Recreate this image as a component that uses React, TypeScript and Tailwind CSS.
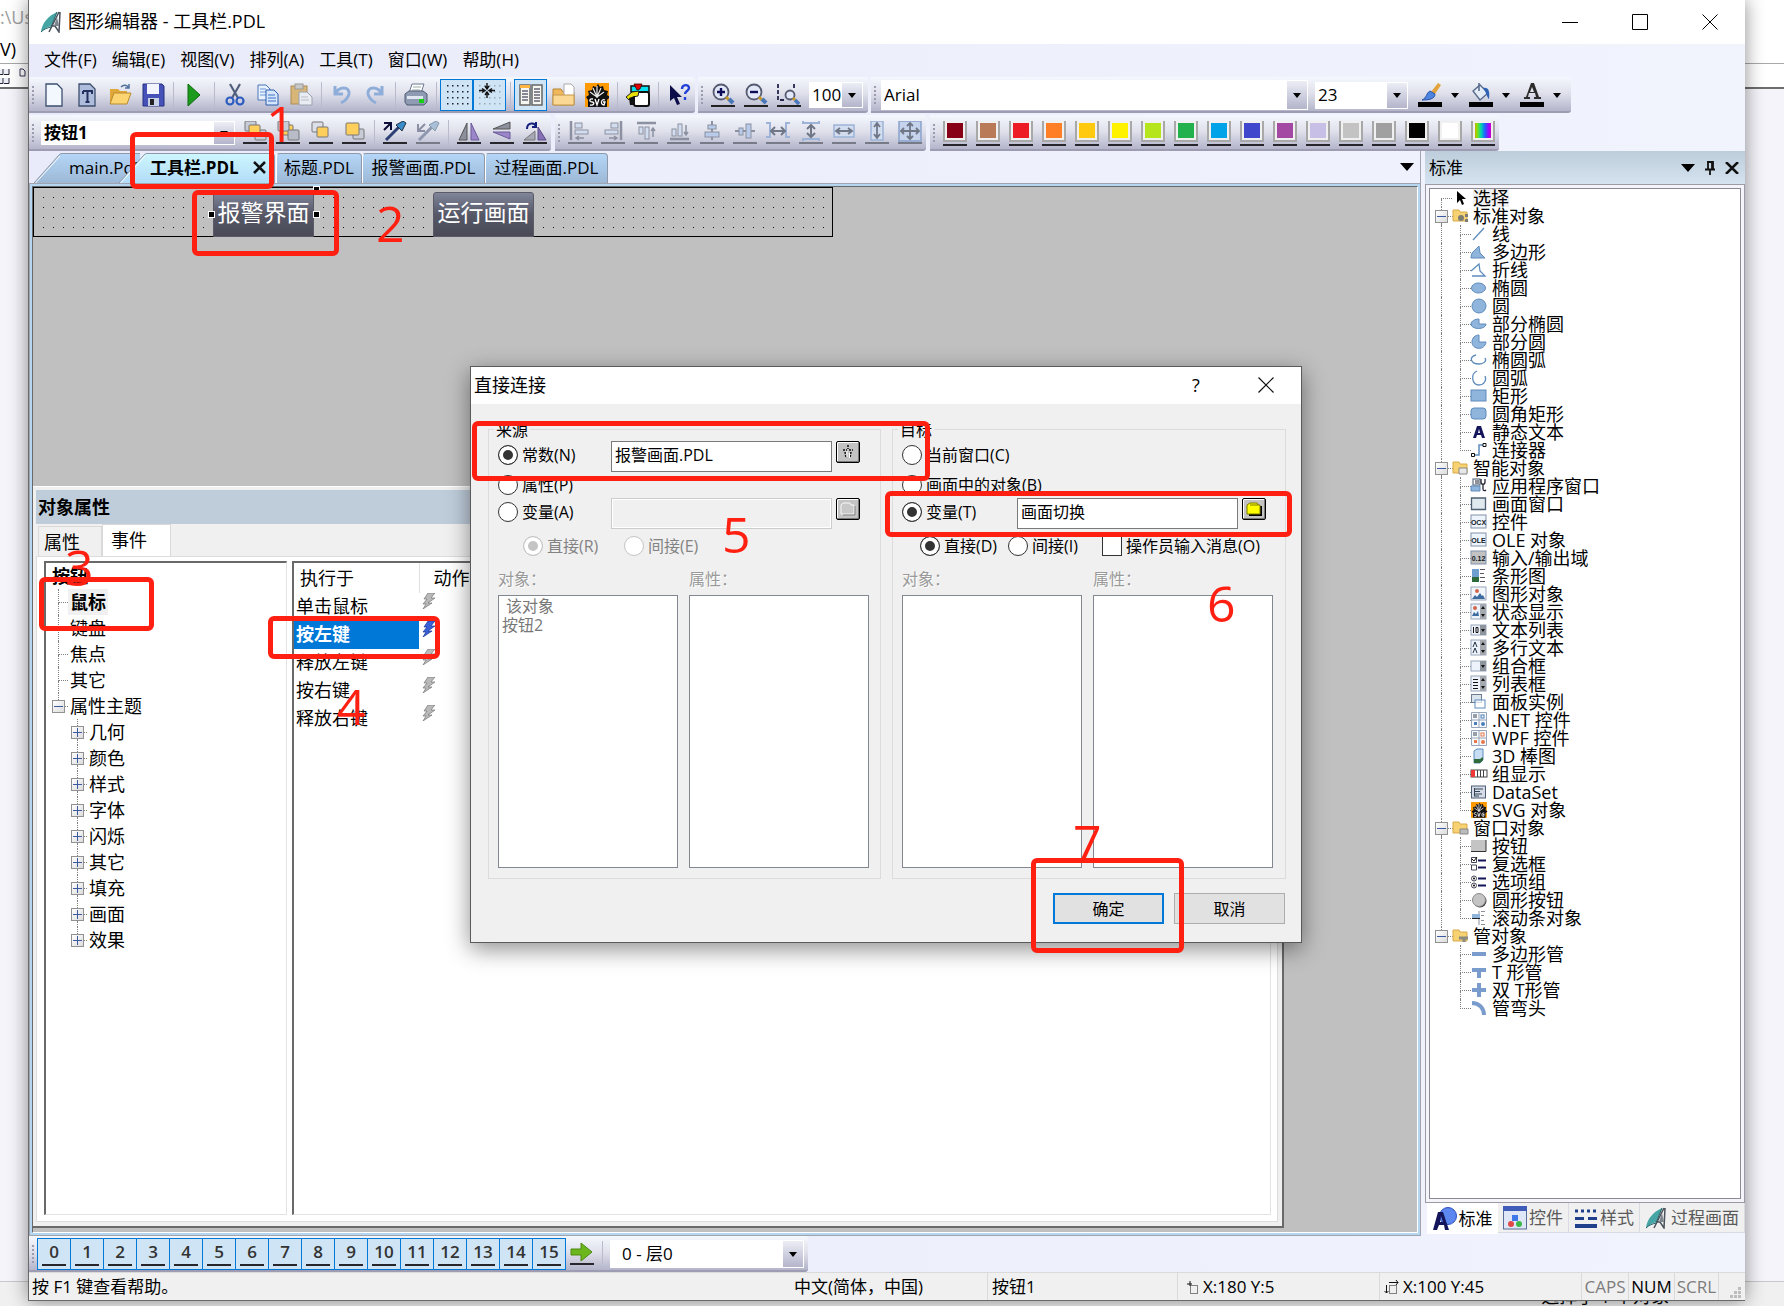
import React from 'react'

type TreeItem = {
  name: string
  icon: string
}

type TreeGroup = {
  name: string
  badge: string
  items: TreeItem[]
}

type Mark = {
  boxClass: string
  digit: string
  digitClass: string
}

const menus = ['文件(F)', '编辑(E)', '视图(V)', '排列(A)', '工具(T)', '窗口(W)', '帮助(H)']

const swatches = [
  'bg-[#880015]',
  'bg-[#b97a57]',
  'bg-[#ed1c24]',
  'bg-[#ff7f27]',
  'bg-[#ffc90e]',
  'bg-[#fff200]',
  'bg-[#b5e61d]',
  'bg-[#22b14c]',
  'bg-[#00a2e8]',
  'bg-[#3f48cc]',
  'bg-[#a349a4]',
  'bg-[#c8bfe7]',
  'bg-[#c3c3c3]',
  'bg-[#a0a0a0]',
  'bg-black',
  'bg-white',
  'bg-[linear-gradient(to_right,#ff7a00,#8be000,#00d8b0,#2060ff,#a000ff,#ff0080)]',
]

const groups: TreeGroup[] = [
  {
    name: '标准对象',
    badge: 'gear',
    items: [
      { name: '线', icon: 'line' },
      { name: '多边形', icon: 'polygon' },
      { name: '折线', icon: 'polyline' },
      { name: '椭圆', icon: 'ellipse' },
      { name: '圆', icon: 'circle' },
      { name: '部分椭圆', icon: 'pieEllipse' },
      { name: '部分圆', icon: 'pie' },
      { name: '椭圆弧', icon: 'arcEllipse' },
      { name: '圆弧', icon: 'arc' },
      { name: '矩形', icon: 'rect' },
      { name: '圆角矩形', icon: 'roundRect' },
      { name: '静态文本', icon: 'text' },
      { name: '连接器', icon: 'connector' },
    ],
  },
  {
    name: '智能对象',
    badge: 'picture',
    items: [
      { name: '应用程序窗口', icon: 'appWindow' },
      { name: '画面窗口', icon: 'pictureWindow' },
      { name: '控件', icon: 'ocx' },
      { name: 'OLE 对象', icon: 'ole' },
      { name: '输入/输出域', icon: 'io' },
      { name: '条形图', icon: 'bar' },
      { name: '图形对象', icon: 'image' },
      { name: '状态显示', icon: 'status' },
      { name: '文本列表', icon: 'textList' },
      { name: '多行文本', icon: 'multiText' },
      { name: '组合框', icon: 'combo' },
      { name: '列表框', icon: 'listBox' },
      { name: '面板实例', icon: 'faceplate' },
      { name: '.NET 控件', icon: 'net' },
      { name: 'WPF 控件', icon: 'wpf' },
      { name: '3D 棒图', icon: 'bar3d' },
      { name: '组显示', icon: 'groupDisplay' },
      { name: 'DataSet', icon: 'dataSet' },
      { name: 'SVG 对象', icon: 'svg' },
    ],
  },
  {
    name: '窗口对象',
    badge: 'button',
    items: [
      { name: '按钮', icon: 'button' },
      { name: '复选框', icon: 'check' },
      { name: '选项组', icon: 'radio' },
      { name: '圆形按钮', icon: 'roundButton' },
      { name: '滚动条对象', icon: 'slider' },
    ],
  },
  {
    name: '管对象',
    badge: 'pipe',
    items: [
      { name: '多边形管', icon: 'pipe' },
      { name: 'T 形管', icon: 'tPipe' },
      { name: '双 T形管', icon: 'crossPipe' },
      { name: '管弯头', icon: 'bend' },
    ],
  },
]

const eventNodes = ['鼠标', '键盘', '焦点', '其它']
const themeNodes = ['几何', '颜色', '样式', '字体', '闪烁', '其它', '填充', '画面', '效果']
const eventRows = ['单击鼠标', '按左键', '释放左键', '按右键', '释放右键']
const layers = Array.from({ length: 16 }, (_, i) => i)

const marks: Mark[] = [
  { boxClass: 'left-[130px] top-[132px] w-[144px] h-[57px]', digit: '1', digitClass: 'left-[266px] top-[96px]' },
  { boxClass: 'left-[192px] top-[190px] w-[147px] h-[66px]', digit: '2', digitClass: 'left-[376px] top-[196px]' },
  { boxClass: 'left-[39px] top-[577px] w-[115px] h-[54px]', digit: '3', digitClass: 'left-[65px] top-[540px]' },
  { boxClass: 'left-[268px] top-[616px] w-[172px] h-[43px]', digit: '4', digitClass: 'left-[337px] top-[679px]' },
  { boxClass: 'left-[472px] top-[421px] w-[458px] h-[60px]', digit: '5', digitClass: 'left-[722px] top-[507px]' },
  { boxClass: 'left-[885px] top-[491px] w-[407px] h-[46px]', digit: '6', digitClass: 'left-[1207px] top-[576px]' },
  { boxClass: 'left-[1031px] top-[858px] w-[153px] h-[95px]', digit: '7', digitClass: 'left-[1073px] top-[815px]' },
]

const folder = (
  <>
    <path d="M2 6h8l2 2h7v13H2z" fill="#e0a838" />
    <path d="M2 21l4-11h17l-4 11z" fill="#fcd472" stroke="#b98a2c" />
  </>
)

const svgTree = (
  <>
    <rect width="24" height="24" fill="#ff9900" />
    <path d="M3 24v-7l-2-3 3-2-1-4 4-1 1-4 3 1 2-3 2 3 3-1 1 4 4 1-1 4 3 2-3 3v7z" fill="#111" />
    <path d="M12 15V3M12 14L8 5M12 14l4-9M12 14L5 9M12 14l7-5" stroke="#e8e8e8" strokeWidth="1.200" fill="none" />
    <path d="M8 16c-4-1-4 3-1 3s2 4-2 3M10 16l2 6 2-6M20 17c-4-2-5 5-1 5l1-3h-2" stroke="#fff" strokeWidth="1.300" fill="none" />
  </>
)

const icons: Record<string, React.ReactNode> = {
  new: <path d="M4 1h11l5 5v17H4z" fill="#f3f8ff" stroke="#3c4f6e" strokeWidth="1.3" />,
  newText: (
    <>
      <path d="M4 1h11l5 5v17H4z" fill="#aebddb" stroke="#3c4f6e" strokeWidth="1.3" />
      <path d="M8 8h9v3M8 8v3M12.500 8v11M10.500 19h4" stroke="#223060" strokeWidth="2" fill="none" />
    </>
  ),
  open: (
    <>
      {folder}
      <path d="M13 4c3-3 6-2 8 1m0-4v4h-4" stroke="#51709c" strokeWidth="1.500" fill="none" />
    </>
  ),
  save: (
    <>
      <path d="M2 1h19l2 2v20H2z" fill="#4652b8" stroke="#27317e" />
      <rect x="6" y="1" width="12" height="10" fill="#f2f5ff" />
      <rect x="7" y="15" width="11" height="8" fill="#c7d0e4" />
      <rect x="9" y="16" width="4" height="6" fill="#222" />
    </>
  ),
  play: <path d="M6 1l12 11L6 23z" fill="#1c9a1c" stroke="#0c6a0c" />,
  cut: (
    <>
      <path d="M7 1l8 14M17 1L9 15" stroke="#50607c" strokeWidth="2.200" />
      <circle cx="7" cy="18" r="3.500" fill="none" stroke="#2c5cc0" strokeWidth="2.200" />
      <circle cx="17" cy="18" r="3.500" fill="none" stroke="#2c5cc0" strokeWidth="2.200" />
    </>
  ),
  copy: (
    <>
      <path d="M2 2h8l4 4v11H2z" fill="#e8f2ff" stroke="#4a74b8" />
      <path d="M4 6h6M4 9h7M4 12h7" stroke="#6b95d4" />
      <path d="M10 7h8l4 4v11H10z" fill="#d5e6fd" stroke="#2c5cae" />
      <path d="M12 12h7M12 15h8M12 18h8" stroke="#3f70c4" />
    </>
  ),
  paste: (
    <>
      <rect x="2" y="3" width="16" height="18" fill="#d8b677" stroke="#a98c58" />
      <rect x="6" y="1" width="8" height="5" fill="#c9c9c9" stroke="#999" />
      <path d="M10 9h8l5 5v8H10z" fill="#e9ecf2" stroke="#9aa2b2" />
      <path d="M12 14h7M12 17h8" stroke="#b7bdc9" />
    </>
  ),
  undo: <path d="M5 3v8h8M5 11c4-8 15-8 14 0-1 4-4 7-8 9" stroke="#8fadd9" strokeWidth="3" fill="none" />,
  redo: <path d="M19 3v8h-8M19 11C15 3 4 3 5 11c1 4 4 7 8 9" stroke="#8fadd9" strokeWidth="3" fill="none" />,
  print: (
    <>
      <path d="M8 1h12l-3 9H5z" fill="#fff" stroke="#6b7890" />
      <path d="M9 4h8M8 7h8" stroke="#9aa" />
      <path d="M1 11l4-3h14l4 3v8l-3 3H3l-2-3z" fill="#8e9bb2" stroke="#4d5a72" />
      <rect x="3" y="13" width="16" height="3" fill="#dfe6f0" />
      <rect x="15" y="16" width="5" height="4" fill="#13d013" />
    </>
  ),
  grid: (
    <g fill="#223">
      {[2, 8, 14, 20].map((y) => [2, 7, 12, 17, 22].map((x) => <rect key={`${x}-${y}`} x={x} y={y} width="1.500" height="1.500" />))}
    </g>
  ),
  snap: (
    <>
      <g fill="#9ab">
        {[2, 8, 14, 20].map((y) => [1, 6, 11, 16, 21].map((x) => <rect key={`${x}-${y}`} x={x} y={y} width="1.500" height="1.500" />))}
      </g>
      <path d="M9 0v5M7 3l2 3 2-3M9 15v-5M7 12l2-3 2 3M1 7.500h5M4 5.500l3 2-3 2M17 7.500h-5M14 5.500l-3 2 3 2" stroke="#111" strokeWidth="1.400" fill="none" />
    </>
  ),
  library: (
    <>
      <path d="M1 2h10v20H1zM13 2h10v20H13z" fill="#f7f7f2" stroke="#666" strokeWidth="1.500" />
      <path d="M1 2h10v3H1z" fill="#ffb640" />
      <path d="M3 8h6M3 11h6M3 14h6M3 17h6M15 6h6M15 9h6M15 12h6M15 15h6M15 18h6" stroke="#667" strokeWidth="1.300" />
    </>
  ),
  folderDoc: (
    <>
      <path d="M1 6h8l2 3h11v13H1z" fill="#f0b85a" stroke="#b58535" />
      <path d="M12 1h7l3 3v9H12z" fill="#fff" stroke="#aaa" />
      <path d="M1 12h21v10H1z" fill="#fbd995" stroke="#c39549" />
    </>
  ),
  svgLib: svgTree,
  activeX: (
    <>
      <rect x="5" y="3" width="18" height="6" fill="#00e0f0" stroke="#111" strokeWidth="1.500" />
      <rect x="8" y="9" width="15" height="14" rx="2" fill="#fff" stroke="#111" strokeWidth="2" />
      <path d="M8 1h8l-2 5-3 1z" fill="#e00000" stroke="#400" strokeWidth=".8" />
      <path d="M0 14l6-5 7-1-1 5-5 1-4 3z" fill="#e8e000" stroke="#222" />
      <path d="M3 15l6-2v9H4z" fill="#111" />
    </>
  ),
  help: (
    <>
      <path d="M3 2v16l4-3 3 7 3-1-3-7h5z" fill="#0c0c48" />
      <path d="M15 6c0-5 7-5 7-1 0 3-4 3-4 6M18 14v3" stroke="#2440d8" strokeWidth="2.400" fill="none" />
    </>
  ),
  zoomIn: (
    <>
      <circle cx="10" cy="9" r="7.500" fill="#e2e8f8" stroke="#555a70" strokeWidth="1.800" />
      <path d="M6 9h8M10 5v8" stroke="#0c0c58" strokeWidth="2.400" />
      <path d="M15 14l3 3" stroke="#c89828" strokeWidth="3" />
      <path d="M18 16l4 4" stroke="#4a78b8" strokeWidth="4" />
      <path d="M0 23h24" stroke="#222" strokeWidth="2" />
    </>
  ),
  zoomOut: (
    <>
      <circle cx="10" cy="9" r="7.500" fill="#e2e8f8" stroke="#555a70" strokeWidth="1.800" />
      <path d="M6 9h8" stroke="#0c0c58" strokeWidth="2.400" />
      <path d="M15 14l3 3" stroke="#c89828" strokeWidth="3" />
      <path d="M18 16l4 4" stroke="#4a78b8" strokeWidth="4" />
      <path d="M0 23h24" stroke="#222" strokeWidth="2" />
    </>
  ),
  zoomArea: (
    <>
      <path d="M1 1v16h8M17 1v5" stroke="#26264e" strokeWidth="1.800" strokeDasharray="4 2" fill="none" />
      <circle cx="13" cy="12" r="4.500" fill="#e2e8f8" stroke="#555a70" strokeWidth="1.800" />
      <path d="M16 15l2 2" stroke="#c89828" strokeWidth="3" />
      <path d="M18 17l4 4" stroke="#4a78b8" strokeWidth="3.500" />
      <path d="M0 23h24" stroke="#222" strokeWidth="2" />
    </>
  ),
  brush: (
    <>
      <path d="M20 0l3 2-6 9-4-2z" fill="#e2a33c" />
      <path d="M12 8l5 3c0 5-6 6-13 6 5-2 4-7 8-9z" fill="#4c84e0" stroke="#2853a8" />
    </>
  ),
  bucket: (
    <>
      <path d="M4 8l7-6 8 8-8 7z" fill="#e2ebf6" stroke="#55688a" strokeWidth="1.300" />
      <path d="M10 0v8" stroke="#55688a" strokeWidth="1.500" />
      <path d="M14 5c6-1 7 4 6 11-2-1-2-6-6-11z" fill="#2e62b4" />
    </>
  ),
  fontColor: <path d="M11 0h3l5 14h2v2h-7v-2h2l-1-4H9l-1 4h2v2H4v-2h2zM12 4l-2 5h4z" fill="#2c2c2c" fillRule="evenodd" />,
}

const block = (x: number, y: number, fill: string) => <rect x={x} y={y} width="11" height="10" rx="1" fill={fill} stroke="#777" />
const GRAY = '#8b91a0'
const PALE = '#d3ddf0'

// Arrange toolbar: every glyph sits on an underline
const arrange: Record<string, React.ReactNode> = {
  front: (
    <>
      {block(2, 0, '#c8ccd8')}
      {block(12, 9, '#c8ccd8')}
      {block(6, 4, '#ffcf5c')}
    </>
  ),
  back: (
    <>
      {block(6, 4, '#ffcf5c')}
      {block(2, 0, '#c8ccd8')}
      {block(12, 9, '#b8bcc8')}
    </>
  ),
  forward: (
    <>
      {block(3, 1, '#dde0e8')}
      {block(8, 6, '#ffcf5c')}
    </>
  ),
  backward: (
    <>
      {block(11, 8, '#c8ccd8')}
      <rect x="4" y="2" width="13" height="12" rx="1" fill="#ffcf5c" stroke="#777" />
    </>
  ),
  pick: (
    <>
      <path d="M3 19L16 6" stroke="#2e3f74" strokeWidth="3" />
      <path d="M13 4l6 6 4-8-3-2z" fill="#3a8cc8" stroke="#234" />
      <path d="M1 2h7v7M1 9l7-7" stroke="#0c0c38" strokeWidth="2" fill="none" />
    </>
  ),
  apply: (
    <>
      <path d="M3 19L16 6" stroke="#8f97b0" strokeWidth="3" />
      <path d="M13 4l6 6 4-8-3-2z" fill="#a9bfd8" stroke="#89a" />
      <path d="M2 3v7h7M2 10l7-7" stroke="#8a8fa5" strokeWidth="2" fill="none" />
    </>
  ),
  mirrorV: (
    <>
      <path d="M10 2v17H2z" fill="#8c909c" stroke="#555" />
      <path d="M14 2v17h8z" fill="#9a86c8" stroke="#6a5a98" />
    </>
  ),
  mirrorH: (
    <>
      <path d="M20 1v7H3z" fill="#8c909c" stroke="#555" />
      <path d="M20 18v-7H3z" fill="#9a86c8" stroke="#6a5a98" />
    </>
  ),
  rotate: (
    <>
      <path d="M12 10v9H1z" fill="#a5a9b6" stroke="#777" />
      <path d="M15 6v13h8z" fill="#8671b4" stroke="#5a4a88" />
      <path d="M4 8c0-7 8-7 9-2m0-5v5H9" stroke="#14207c" strokeWidth="2" fill="none" />
    </>
  ),
}

const aligners: React.ReactNode[] = [
  <g key="left"><path d="M3 0v19" stroke={GRAY} strokeWidth="2.500" /><rect x="7" y="2" width="7" height="5" fill={PALE} stroke={GRAY} /><rect x="7" y="9" width="13" height="4" fill={PALE} stroke={GRAY} /><path d="M8 17h8M11 15l-3 2 3 2" stroke={GRAY} strokeWidth="1.500" fill="none" /></g>,
  <g key="right"><path d="M20 0v19" stroke={GRAY} strokeWidth="2.500" /><rect x="10" y="2" width="7" height="5" fill={PALE} stroke={GRAY} /><rect x="4" y="9" width="13" height="4" fill={PALE} stroke={GRAY} /><path d="M8 17h8M13 15l3 2-3 2" stroke={GRAY} strokeWidth="1.500" fill="none" /></g>,
  <g key="top"><path d="M3 2h19" stroke={GRAY} strokeWidth="2.500" /><rect x="5" y="6" width="4" height="7" fill={PALE} stroke={GRAY} /><rect x="11" y="6" width="4" height="12" fill={PALE} stroke={GRAY} /><path d="M19 16V7M17 10l2-3 2 3" stroke={GRAY} strokeWidth="1.500" fill="none" /></g>,
  <g key="bottom"><path d="M3 18h19" stroke={GRAY} strokeWidth="2.500" /><rect x="5" y="8" width="4" height="7" fill={PALE} stroke={GRAY} /><rect x="11" y="3" width="4" height="12" fill={PALE} stroke={GRAY} /><path d="M19 4v10M17 11l2 3 2-3" stroke={GRAY} strokeWidth="1.500" fill="none" /></g>,
  <g key="centerH"><path d="M12 0v19" stroke={GRAY} strokeWidth="2" /><rect x="8" y="4" width="8" height="4" fill="#b9cbea" stroke={GRAY} /><rect x="5" y="11" width="14" height="5" fill="#b9cbea" stroke={GRAY} /></g>,
  <g key="centerV"><path d="M2 10h20" stroke={GRAY} strokeWidth="2" /><rect x="6" y="7" width="4" height="7" fill="#b9cbea" stroke={GRAY} /><rect x="13" y="3" width="5" height="14" fill="#b9cbea" stroke={GRAY} /></g>,
  <g key="spaceH"><path d="M0 2h4v14H0M24 2h-4v14h4" stroke="#9db3d8" strokeWidth="2" fill="none" /><path d="M5 10h14M9 6l-4 4 4 4M15 6l4 4-4 4" stroke="#6f7686" strokeWidth="2" fill="none" /></g>,
  <g key="spaceV"><path d="M4 0v2h16V0M4 20v-2h16v2" stroke="#9db3d8" strokeWidth="2" fill="none" /><path d="M12 4v12M8 8l4-4 4 4M8 12l4 4 4-4" stroke="#6f7686" strokeWidth="2" fill="none" /></g>,
  <g key="sameW"><rect x="2" y="4" width="20" height="12" fill="#d3ddf0" stroke="#9db3d8" strokeWidth="1.500" /><path d="M5 10h14M8 7l-4 3 4 3M16 7l4 3-4 3" stroke="#6f7686" strokeWidth="1.800" fill="none" /></g>,
  <g key="sameH"><rect x="6" y="0" width="12" height="19" fill="#d3ddf0" stroke="#9db3d8" strokeWidth="1.500" /><path d="M12 2v15M9 6l3-4 3 4M9 13l3 4 3-4" stroke="#6f7686" strokeWidth="1.800" fill="none" /></g>,
  <g key="sameWH"><rect x="1" y="0" width="22" height="20" fill="#c5d3ec" stroke="#8aa2cc" strokeWidth="1.500" /><path d="M12 2v16M3 10h18M9 5l3-3 3 3M9 15l3 3 3-3M6 7l-3 3 3 3M18 7l3 3-3 3" stroke="#6f7686" strokeWidth="1.800" fill="none" /></g>,
]

const BLUE = '#8fb5dc'
const EDGE = '#5f8cbc'

const boxWithSpin = (
  <>
    <rect x="0" y="0" width="15" height="15" fill="#eef3fb" stroke="#97a5ba" />
    <rect x="9" y="0" width="6" height="15" fill="#a5a9b0" />
    <path d="M10 5l2-3 2 3zM10 10l2 3 2-3z" fill="#111" />
  </>
)

const boxWithDrop = (
  <>
    <rect x="0" y="3" width="15" height="10" fill="#eef3fb" stroke="#97a5ba" />
    <rect x="9" y="3" width="6" height="10" fill="#8f959d" />
    <path d="M10 7h4l-2 3z" fill="#111" />
  </>
)

const scenery = <path d="M1 13l3-4 2 2 3-4 2 3 1-1 2 4z" fill="#3d6ca0" />

const quad = (dot: string) => (
  <>
    <path d="M.5.5h15v15H.5zM8 0v16M0 8h16" fill="#f8fafd" stroke="#97a5ba" />
    <path d="M2 3h4M2 5h4" stroke="#345" />
    <rect x="10" y="3" width="3" height="3" fill="none" stroke={dot} />
    <rect x="3" y="10" width="3" height="3" fill={dot} />
    <circle cx="12" cy="12" r="2" fill={dot} />
  </>
)

const tiny = (label: string, fill: string) => (
  <>
    <rect x="0" y="1" width="15" height="13" fill={fill} stroke="#8091aa" />
    <text x="7.500" y="11" fontSize="7" fontWeight="700" textAnchor="middle" fill="#101828" className="font-['Liberation_Sans_Narrow','Liberation_Sans',sans-serif]">
      {label}
    </text>
  </>
)

const treeIcons: Record<string, React.ReactNode> = {
  cursor: <path d="M5 1v12l3-3 2 5 2-1-2-5h4z" fill="#000" />,
  line: <path d="M2 14L13 2" stroke={EDGE} strokeWidth="1.300" />,
  polygon: <path d="M0 13l1-4 7-7 1 7 5 5H0z" fill={BLUE} stroke={EDGE} />,
  polyline: <path d="M0 9l8-7 1 7 5 5H1" fill="none" stroke={EDGE} strokeWidth="1.300" />,
  ellipse: <ellipse cx="7.500" cy="8" rx="7" ry="5" fill={BLUE} stroke={EDGE} />,
  circle: <circle cx="8" cy="8" r="7" fill={BLUE} stroke={EDGE} />,
  pieEllipse: <path d="M8 3v5h7c0 6-15 6-15 0 0-3 4-5 8-5z" fill={BLUE} stroke={EDGE} />,
  pie: <path d="M8 1v7h7c-1 9-14 8-14 0 0-4 3-7 7-7z" fill={BLUE} stroke={EDGE} />,
  arcEllipse: <path d="M5 3C-3 5 0 12 8 12c5 0 8-3 6-6" fill="none" stroke={EDGE} strokeWidth="1.300" />,
  arc: <path d="M6 1C-1 4 1 15 8 15c5 0 8-5 6-9" fill="none" stroke={EDGE} strokeWidth="1.300" />,
  rect: <rect x="0" y="2" width="15" height="11" fill={BLUE} stroke={EDGE} />,
  roundRect: <rect x="0" y="2" width="15" height="11" rx="3" fill={BLUE} stroke={EDGE} />,
  text: <path d="M6 2h4l4 12h-3l-1-3H6l-1 3H2zM8 5L7 9h2z" fill="#14145a" fillRule="evenodd" />,
  connector: (
    <>
      <path d="M2 13h6V3h6" fill="none" stroke={EDGE} strokeWidth="1.500" />
      <path d="M.5 11.500h3v3h-3zM12 1.500h3v3h-3z" fill="#fff" stroke="#111" />
    </>
  ),
  appWindow: (
    <>
      <rect x="2" y="1" width="7" height="6" fill="#fff" stroke="#456" />
      <path d="M4 3h4M4 5h4" stroke="#223" />
      <path d="M0 8h9v5H0z" fill={BLUE} stroke={EDGE} />
      <path d="M10 1v3c0 3 4 3 4 0V1M12 6v5c0 2 2 2 3 1" stroke="#223" fill="none" strokeWidth="1.300" />
    </>
  ),
  pictureWindow: <path d="M.5 2h14v11.500H.5z" fill="#dfe9ee" stroke="#4d5f70" strokeWidth="1.300" />,
  ocx: tiny('OCX', '#eef4fb'),
  ole: tiny('OLE', '#eef4fb'),
  io: tiny('0.12', '#c2c2c2'),
  bar: (
    <>
      <rect x="1" y="1" width="7" height="9" fill="#6f9fd0" />
      <rect x="1" y="9" width="7" height="5" fill="#2f6b3a" />
      <path d="M9 1.500h5M9 5.500h4M9 9.500h5M9 13.500h5" stroke="#556" />
    </>
  ),
  image: (
    <>
      <rect x="0" y="1" width="15" height="13" fill="#f2f6fb" stroke="#97a5ba" />
      <circle cx="6" cy="5" r="2" fill="#d0674a" />
      {scenery}
    </>
  ),
  status: (
    <>
      {boxWithSpin}
      <circle cx="4" cy="4" r="2" fill="#d0674a" />
      <path d="M1 12l2-4 2 2 2-3 1 5z" fill="#3d6ca0" />
    </>
  ),
  textList: (
    <>
      {boxWithDrop}
      <path d="M2.500 5v6M5 5.500h2v5H5z" stroke="#111" fill="none" />
    </>
  ),
  multiText: (
    <>
      {boxWithSpin}
      <path d="M2 7l2-5 2 5M2 13l2-5 2 5" stroke="#234" fill="none" />
    </>
  ),
  combo: boxWithDrop,
  listBox: (
    <>
      {boxWithSpin}
      <path d="M2 3.500h5M2 6.500h5M2 9.500h5M2 12.500h5" stroke="#111" />
    </>
  ),
  faceplate: (
    <>
      <rect x=".5" y=".5" width="10" height="8" fill="#dbe5ee" stroke="#6b7c90" />
      <rect x="4" y="6" width="10" height="8" fill="#fff" fillOpacity=".7" stroke={EDGE} />
    </>
  ),
  net: quad('#4a7fb8'),
  wpf: quad('#e8784a'),
  bar3d: (
    <>
      <path d="M3 3l3-2h6v11l-3 3H3z" fill="#c7ddf4" stroke={EDGE} />
      <path d="M3 11h6l3-2v3l-3 3H3z" fill="#2f6b3a" />
    </>
  ),
  groupDisplay: (
    <>
      <rect x="0" y="4" width="16" height="7" fill="#fff" stroke="#444" />
      <rect x="0" y="4" width="4" height="7" fill="#ee3838" />
      <path d="M6.500 4v7M9.500 4v7M12.500 4v7" stroke="#444" />
    </>
  ),
  dataSet: (
    <>
      <rect x=".5" y="2" width="14" height="12" fill="#d5dce8" stroke="#4d5f70" />
      <path d="M3 5h9M3 7.500h6M3 10h8M3 12h5M3.500 4v8" stroke="#345" />
    </>
  ),
  svg: <g transform="scale(0.66)">{svgTree}</g>,
  button: (
    <>
      <rect x="0" y="2" width="15" height="11" fill="#c4c4c4" />
      <path d="M0 13.500h15V2" stroke="#333" fill="none" />
    </>
  ),
  check: (
    <>
      <path d="M.5 1.500h5v5h-5zM.5 9h5v5h-5z" fill="#fff" stroke="#445" />
      <path d="M1 3l2 2 3-4" stroke="#111" fill="none" />
      <path d="M7 4.500h8M7 11.500h8" stroke="#14145a" strokeWidth="2" />
    </>
  ),
  radio: (
    <>
      <circle cx="3" cy="4.500" r="2.500" fill="#fff" stroke="#445" />
      <circle cx="3" cy="11.500" r="2.500" fill="#fff" stroke="#445" />
      <circle cx="3" cy="4.500" r="1" />
      <circle cx="3" cy="11.500" r="1" />
      <path d="M7 4.500h8M7 11.500h8" stroke="#14145a" strokeWidth="2" />
    </>
  ),
  roundButton: (
    <>
      <circle cx="9" cy="9" r="6.500" fill="#333" />
      <circle cx="8" cy="8" r="6.500" fill="#c4c4c4" stroke="#8a8a8a" />
    </>
  ),
  slider: (
    <>
      <path d="M8 1v14M10 1.500h4M10 5.500h3M10 10.500h3M10 14.500h4" stroke="#8a8f98" />
      <path d="M1 4h8v4H1z" fill={BLUE} />
      <path d="M1 8.500h8" stroke="#222" />
    </>
  ),
  pipe: <path d="M1 8h14" stroke="#7a9ccc" strokeWidth="4" />,
  tPipe: <path d="M1 6h14M8 6v8" stroke="#7a9ccc" strokeWidth="4" />,
  crossPipe: <path d="M1 8h14M8 1v14" stroke="#7a9ccc" strokeWidth="4" />,
  bend: <path d="M1 3c7 0 12 5 12 12" stroke="#7a9ccc" strokeWidth="4" fill="none" />,
}

const badges: Record<string, React.ReactNode> = {
  gear: <path d="M5 10a3 3 0 1 0 6 0 3 3 0 1 0-6 0M12 6h3v3h-3zM12 11h3v3h-3z" fill="#7c7c74" />,
  picture: <path d="M6 8h8v6H6z" fill="#e8e8e8" stroke="#888" />,
  button: <path d="M7 9h8v5H7z" fill="#bbb" stroke="#888" />,
  pipe: <path d="M6 10h9M11 10v4" stroke="#8a8a80" strokeWidth="3" />,
}

function Icon({ children }: { children: React.ReactNode }) {
  return (
    <svg className="w-6 h-6 shrink-0" viewBox="0 0 24 24">
      {children}
    </svg>
  )
}

function SmallIcon({ children }: { children: React.ReactNode }) {
  return (
    <svg className="w-4 h-4 shrink-0 overflow-visible" viewBox="0 0 16 16">
      {children}
    </svg>
  )
}

function AppLogo() {
  return (
    <svg className="w-[22px] h-[22px] shrink-0" viewBox="0 0 22 22">
      <path d="M1 21C2 12 8 5 17 1l-6 14-5 2z" fill="#45a5a5" />
      <path d="M1 21c3-3 6-4 10-5l6-15" fill="none" stroke="#1f5f66" />
      <path d="M19 1L9 21M20 1l-1 20-4-6h-3" stroke="#4a525c" strokeWidth="1.500" fill="none" />
      <path d="M17 6l2 9h-5z" fill="#7d868e" />
    </svg>
  )
}

function Bar({ children, className = '' }: { children: React.ReactNode; className?: string }) {
  return (
    <div
      className={`h-9 pt-0.5 flex items-center rounded-r-[3px] border-b-2 border-[#9d9cb3] bg-linear-to-b from-[#f5f8fe] via-[#dedfea] to-[#b4b4cb] ${className}`}
    >
      <span className="w-2 h-[18px] shrink-0 flex justify-center">
        <span className="border-l-2 border-dotted border-[#9c9cb0]"></span>
      </span>
      {children}
    </div>
  )
}

function Sep() {
  return (
    <span className="w-2 h-[26px] shrink-0 flex justify-center">
      <span className="w-px bg-[#b9bacb]"></span>
    </span>
  )
}

function ToolButton({ label, active, children }: { label: string; active?: boolean; children: React.ReactNode }) {
  return (
    <button
      aria-label={label}
      className={`w-[33px] h-8 shrink-0 flex items-center justify-center ${active ? 'border border-[#0078d7] bg-[#cfe4f5]' : ''}`}
    >
      <Icon>{children}</Icon>
    </button>
  )
}

function LinedButton({ label, muted, children }: { label: string; muted?: boolean; children: React.ReactNode }) {
  return (
    <ToolButton label={label}>
      {children}
      <path d="M0 22h24" stroke={muted ? '#777b88' : '#26262c'} strokeWidth="2" />
    </ToolButton>
  )
}

function ColorDrop({ label, children }: { label: string; children: React.ReactNode }) {
  return (
    <button aria-label={label} className="w-[51px] h-8 shrink-0 flex items-center gap-[9px]">
      <svg className="w-6 h-6" viewBox="0 0 24 24">
        {children}
        <rect x="0" y="19" width="24" height="5" fill="#000" />
      </svg>
      <Arrow />
    </button>
  )
}

function Arrow() {
  return (
    <svg className="w-2 h-[5px] shrink-0" viewBox="0 0 8 5">
      <path d="M0 0h8L4 5z" fill="#000" />
    </svg>
  )
}

function Combo({ label, value, className }: { label: string; value: string; className: string }) {
  return (
    <div className={`flex shrink-0 items-stretch bg-white border border-white ${className}`}>
      <select aria-label={label} defaultValue={value} className="appearance-none flex-1 min-w-0 bg-white pl-0.5 leading-5 outline-none">
        <option>{value}</option>
      </select>
      <span className="w-5 shrink-0 flex items-center justify-center bg-linear-to-b from-[#eceef6] to-[#b4b4cb]">
        <Arrow />
      </span>
    </div>
  )
}

function Toggle({ open }: { open?: boolean }) {
  return (
    <span className="w-[13px] h-[13px] shrink-0 flex items-center justify-center border border-[#919191] bg-linear-to-br from-white to-[#dcdcdc]">
      <svg className="w-[9px] h-[9px]" viewBox="0 0 9 9">
        <path d={open ? 'M0 4.500h9' : 'M0 4.500h9M4.500 0v9'} stroke="#3c5aa0" />
      </svg>
    </span>
  )
}

// Toggle with the dotted rail running into it from above and, if more follows, below
function RailToggle({ open, above = true, below = true }: { open?: boolean; above?: boolean; below?: boolean }) {
  return (
    <span className="w-[13px] self-stretch flex flex-col items-center shrink-0">
      <span className={`flex-1 ${above ? 'border-l border-dotted border-[#808080]' : ''}`}></span>
      <Toggle open={open} />
      <span className={`flex-1 ${below ? 'border-l border-dotted border-[#808080]' : ''}`}></span>
    </span>
  )
}

function Branch({ last, className }: { last?: boolean; className: string }) {
  return (
    <span className={`self-stretch flex flex-col shrink-0 ${className}`}>
      <span className="flex-1 border-l border-b border-dotted border-[#808080]"></span>
      <span className={`flex-1 ${last ? '' : 'border-l border-dotted border-[#808080]'}`}></span>
    </span>
  )
}

function ObjectTree() {
  return (
    <ul className="text-[18px] leading-[18px] whitespace-nowrap">
      <li className="h-[18px] flex items-center pl-[11px]">
        <span className="self-stretch w-[11px] flex flex-col shrink-0">
          <span className="flex-1 border-b border-dotted border-[#808080]"></span>
          <span className="flex-1 border-l border-dotted border-[#808080]"></span>
        </span>
        <SmallIcon>{treeIcons.cursor}</SmallIcon>
        <span className="ml-[5px] bg-[#f0f0f0]">选择</span>
      </li>
      {groups.map((group, g) => {
        const lastGroup = g === groups.length - 1
        return (
          <li key={group.name}>
            <div className="h-[18px] flex items-center pl-[5px]">
              <RailToggle open below={!lastGroup} />
              <span className="w-[5px] border-t border-dotted border-[#808080]"></span>
              <SmallIcon>
                <path d="M0 2h6l1 2h7v9H0z" fill="#f7d272" stroke="#d8a94a" />
                {badges[group.badge]}
              </SmallIcon>
              <span className="ml-1">{group.name}</span>
            </div>
            <ul>
              {group.items.map((item, i) => (
                <li key={item.name} className="h-[18px] flex items-center pl-[11px]">
                  <span className={`w-[19px] self-stretch shrink-0 ${lastGroup ? '' : 'border-l border-dotted border-[#808080]'}`}></span>
                  <Branch last={i === group.items.length - 1} className="w-[11px]" />
                  <SmallIcon>{treeIcons[item.icon]}</SmallIcon>
                  <span className="ml-[5px]">{item.name}</span>
                </li>
              ))}
            </ul>
          </li>
        )
      })}
    </ul>
  )
}

function DocTab({ name, wide }: { name: string; wide?: boolean }) {
  return (
    <button
      className={`h-[30px] shrink-0 pb-0.5 flex items-center justify-center rounded-t-[4px] border-t border-l border-r border-[#8e98a8] border-l-white bg-linear-to-b from-[#b5d6f7] to-[#9cb8d6] ${wide ? 'w-[123px]' : 'w-[86px]'}`}
    >
      {name}
    </button>
  )
}

function Slant({ active }: { active?: boolean }) {
  return (
    <svg className="w-7 h-[30px] shrink-0" viewBox="0 0 28 30">
      <defs>
        <linearGradient id={active ? 'slantOn' : 'slantOff'} x1="0" y1="0" x2="0" y2="1">
          <stop offset="0" stopColor={active ? '#cdf6fe' : '#b5d6f7'} />
          <stop offset="1" stopColor={active ? '#b2dcf8' : '#9cb8d6'} />
        </linearGradient>
      </defs>
      <path d="M0 30L25 2q1-2 3-2v30z" fill={active ? 'url(#slantOn)' : 'url(#slantOff)'} />
      <path d="M0 30L25 2q1-1.500 3-1.500" fill="none" stroke="#8e98a8" />
      <path d="M1.500 30L26 3" fill="none" stroke="#fff" />
    </svg>
  )
}

function CanvasButton({ text, className }: { text: string; className: string }) {
  return (
    <button
      className={`absolute top-1 w-[101px] h-[45px] pb-1.5 flex items-center justify-center rounded-t-[3px] border border-[#5a5a68] bg-linear-to-b from-[#80859a] via-[#565867] to-[#4a4a57] text-white text-[23px] leading-6 ${className}`}
    >
      {text}
    </button>
  )
}

function Bolt({ on }: { on?: boolean }) {
  return (
    <svg className="w-[14px] h-4" viewBox="0 0 14 16">
      <path d="M6 0h7L9 5h4L6 10h4L1 16l3-5H1l4-5H2z" fill={on ? '#3a62d8' : '#b9b9b9'} stroke={on ? '#1d3796' : '#777'} strokeWidth=".7" />
    </svg>
  )
}

function PropertyWindow() {
  return (
    <section className="absolute left-0 right-[133px] top-[299px] bottom-1 flex flex-col bg-[#f0f0f0] border-t border-white border-r-2 border-b-2 border-r-[#696969] border-b-[#696969] pt-[3px] pl-[3px] pr-1 pb-1 text-[18px] leading-5">
      <h2 className="h-[34px] shrink-0 flex items-center pl-0.5 bg-[#bfcddb] font-bold">对象属性</h2>
      <div role="tablist" className="h-8 shrink-0 flex items-end pl-0.5">
        <button role="tab" className="w-16 h-[30px] pl-[5px] text-left border border-b-0 border-[#d9d9d9]">
          属性
        </button>
        <button role="tab" aria-selected="true" className="w-[69px] h-8 pl-2 pb-0.5 text-left bg-white border border-b-0 border-[#d9d9d9]">
          事件
        </button>
      </div>
      <div className="flex-1 min-h-0 flex gap-[5px] bg-white border border-[#dcdcdc] pt-1 pl-[7px] pr-1.5 pb-1.5">
        <ul className="w-[243px] shrink-0 border-t-2 border-l-2 border-[#696969] border-r border-b border-r-[#e3e3e3] border-b-[#e3e3e3] pl-1.5">
          <li>
            <div className="h-[26px] flex items-center font-bold">按钮</div>
            <ul>
              {eventNodes.map((name, i) => (
                <li key={name} className="h-[26px] flex items-center pl-1.5">
                  <Branch className="w-[10px]" />
                  <span className={i === 0 ? 'h-[26px] px-0.5 flex items-center bg-[#f0f0f0] font-bold' : 'px-0.5'}>{name}</span>
                </li>
              ))}
              <li>
                <div className="h-[26px] flex items-center">
                  <RailToggle open below={false} />
                  <span className="w-[3px] border-t border-dotted border-[#808080]"></span>
                  <span className="px-0.5">属性主题</span>
                </div>
                <ul className="pl-[19px]">
                  {themeNodes.map((name, i) => (
                    <li key={name} className="h-[26px] flex items-center">
                      <RailToggle below={i < themeNodes.length - 1} />
                      <span className="w-[3px] border-t border-dotted border-[#808080]"></span>
                      <span className="px-0.5">{name}</span>
                    </li>
                  ))}
                </ul>
              </li>
            </ul>
          </li>
        </ul>
        <div className="flex-1 border-t-2 border-l-2 border-[#696969] border-r border-b border-r-[#e3e3e3] border-b-[#e3e3e3]">
          <table className="border-collapse">
            <thead>
              <tr className="h-[30px]">
                <th className="w-[125px] p-0 pl-1.5 text-left font-normal border-r border-[#e0e0e0]">执行于</th>
                <th className="w-40 p-0 pl-[14px] text-left font-normal">动作</th>
              </tr>
            </thead>
            <tbody>
              {eventRows.map((name) => {
                const on = name === '按左键'
                return (
                  <tr key={name} className="h-7">
                    <td className={`p-0 pl-0.5 pb-0.5 ${on ? 'bg-[#0078d7] text-white font-bold' : ''}`}>{name}</td>
                    <td className="p-0 pl-[3px] pb-3 align-top">
                      <Bolt on={on} />
                    </td>
                  </tr>
                )
              })}
            </tbody>
          </table>
        </div>
      </div>
    </section>
  )
}

type RadioProps = {
  name: string
  label: string
  checked?: boolean
  disabled?: boolean
  className?: string
}

function Radio({ name, label, checked, disabled, className = '' }: RadioProps) {
  return (
    <label className={`h-7 shrink-0 flex items-center gap-1 ${disabled ? 'text-[#838383]' : ''} ${className}`}>
      <input
        type="radio"
        name={name}
        defaultChecked={checked}
        disabled={disabled}
        className="appearance-none w-5 h-5 shrink-0 rounded-full bg-white border border-[#333] checked:bg-[#333] checked:shadow-[inset_0_0_0_4px_white] disabled:border-[#c4c4c4] disabled:checked:bg-[#c4c4c4]"
      />
      {label}
    </label>
  )
}

function PickButton({ label, children }: { label: string; children: React.ReactNode }) {
  return (
    <button
      type="button"
      aria-label={label}
      className="w-6 h-[22px] ml-1 shrink-0 flex items-center justify-center rounded-[2px] border border-black bg-[#c3c3c3] shadow-[inset_-1px_-1px_0_#777,inset_1px_1px_0_white]"
    >
      <svg className="w-4 h-[14px]" viewBox="0 0 16 14">
        {children}
      </svg>
    </button>
  )
}

function ListPair({ first }: { first?: React.ReactNode }) {
  return (
    <>
      <div className="h-[33px] flex items-center gap-[11px] text-[#9a9a9a] [text-shadow:1px_1px_0_white]">
        <span className="w-[180px]">对象：</span>
        <span className="w-[180px]">属性：</span>
      </div>
      <div className="flex gap-[11px]">
        <div className="w-[180px] h-[273px] bg-white border border-[#828790] pt-px pl-[3px] text-[#787878] leading-[19px]">{first}</div>
        <div className="w-[180px] h-[273px] bg-white border border-[#828790]"></div>
      </div>
    </>
  )
}

function ConnectionDialog() {
  return (
    <form
      role="dialog"
      aria-label="直接连接"
      className="absolute left-[470px] top-[366px] w-[832px] h-[577px] bg-[#f0f0f0] border border-[#5a5a5a] shadow-[0_6px_22px_rgba(0,0,0,0.45)] text-[16px] leading-4"
    >
      <div className="h-[37px] pb-0.5 flex items-center bg-white pl-[3px] text-[18px]">
        <h2 className="flex-1">直接连接</h2>
        <button type="button" className="w-[70px] h-full">
          ?
        </button>
        <button type="button" aria-label="关闭" className="w-[70px] h-full flex items-center justify-center">
          <svg className="w-4 h-4" viewBox="0 0 16 16">
            <path d="M.5.5l15 15M15.500.5l-15 15" stroke="#111" strokeWidth="1.200" />
          </svg>
        </button>
      </div>
      <div className="flex gap-[11px] pt-[14px] pl-[17px]">
        <fieldset className="w-[393px] border border-[#dcdcdc] pl-[5px] pb-[10px]">
          <legend className="pt-1 pb-0.5 px-0.5">来源</legend>
          <div className="pt-px pl-1">
            <div className="h-[31px] flex items-start">
              <Radio name="source" label="常数(N)" checked className="w-[113px]" />
              <input aria-label="常数" defaultValue="报警画面.PDL" className="w-[221px] h-[31px] bg-white border border-[#7a7a7a] px-[3px] pb-1.5 outline-none" />
              <PickButton label="选择常数">
                <path d="M8 0v4M3 5h4M9 5h4M5 7l1 6M11 7l-1 6" stroke="#111" strokeWidth="1.500" strokeDasharray="2 1" fill="none" />
                <path d="M7 6v6M9.500 8v5" stroke="#fff" />
              </PickButton>
            </div>
            <div className="h-[26px] flex items-center">
              <Radio name="source" label="属性(P)" />
            </div>
            <div className="h-8 flex items-start">
              <Radio name="source" label="变量(A)" className="w-[113px]" />
              <input aria-label="变量" disabled className="w-[221px] h-[31px] bg-[#f0f0f0] border border-[#cccccc] shadow-[inset_0_0_0_1px_white]" />
              <PickButton label="选择变量">
                <path d="M1 3l2-2h7l1 2h3v9H1z" fill="#c8c8c8" stroke="#f8f8f8" />
                <path d="M15 4v9H3" stroke="#858585" fill="none" />
              </PickButton>
            </div>
            <div className="h-8 flex items-center pl-[25px]">
              <Radio name="sourceMode" label="直接(R)" checked disabled className="w-[101px]" />
              <Radio name="sourceMode" label="间接(E)" disabled />
            </div>
            <ListPair
              first={
                <ul>
                  <li className="pl-1">该对象</li>
                  <li>按钮2</li>
                </ul>
              }
            />
          </div>
        </fieldset>
        <fieldset className="w-[394px] border border-[#dcdcdc] pl-[5px] pb-[10px]">
          <legend className="pt-1 pb-0.5 px-0.5">目标</legend>
          <div className="pt-px pl-1">
            <div className="h-[31px] flex items-start">
              <Radio name="target" label="当前窗口(C)" />
            </div>
            <div className="h-[26px] flex items-center">
              <Radio name="target" label="画面中的对象(B)" />
            </div>
            <div className="h-8 flex items-start">
              <Radio name="target" label="变量(T)" checked className="w-[115px]" />
              <input aria-label="目标变量" defaultValue="画面切换" className="w-[221px] h-[31px] bg-white border border-[#7a7a7a] px-[3px] pb-1.5 outline-none" />
              <PickButton label="选择目标变量">
                <path d="M3 13h12V4" stroke="#000" strokeWidth="2" fill="none" />
                <path d="M1 3l3-2h7l1 2h2v9H1z" fill="#ffff00" stroke="#7a7a00" />
                <path d="M4 3h8" stroke="#7a7a00" />
              </PickButton>
            </div>
            <div className="h-8 flex items-center pl-[18px]">
              <Radio name="targetMode" label="直接(D)" checked className="w-[88px]" />
              <Radio name="targetMode" label="间接(I)" className="w-[94px]" />
              <label className="flex items-center gap-1 whitespace-nowrap">
                <input type="checkbox" className="appearance-none w-5 h-5 bg-white border border-[#333]" />
                操作员输入消息(O)
              </label>
            </div>
            <ListPair />
          </div>
        </fieldset>
      </div>
      <div className="flex justify-end gap-[10px] pt-[14px] pr-4">
        <button type="button" className="w-[111px] h-[31px] bg-[#e1e1e1] border-2 border-[#0078d7]">
          确定
        </button>
        <button type="button" className="w-[111px] h-[31px] bg-[#e1e1e1] border border-[#adadad]">
          取消
        </button>
      </div>
    </form>
  )
}

function ObjectPanel() {
  return (
    <aside className="w-80 shrink-0 flex flex-col">
      <div className="h-[33px] shrink-0 flex items-center gap-[9px] pl-1 pr-1.5 bg-linear-to-b from-[#becddb] to-[#d5e3f0]">
        <h2 className="flex-1">标准</h2>
        <button aria-label="菜单">
          <svg className="w-[14px] h-2" viewBox="0 0 14 8">
            <path d="M0 0h14L7 8z" />
          </svg>
        </button>
        <button aria-label="固定">
          <svg className="w-3 h-[14px]" viewBox="0 0 12 14">
            <path d="M3 1h6v7M4 1v7M8 1v7M1 8.500h10M6 9v5" stroke="#111" strokeWidth="1.800" fill="none" />
          </svg>
        </button>
        <button aria-label="关闭面板">
          <svg className="w-[14px] h-3" viewBox="0 0 14 12">
            <path d="M1 0l12 12M13 0L1 12" stroke="#111" strokeWidth="2.500" />
          </svg>
        </button>
      </div>
      <div className="flex-1 min-h-0 flex flex-col border border-[#9b9ba5] bg-[#f4f4fa] pt-[3px] px-[3px] pb-[3px]">
        <div className="flex-1 overflow-hidden bg-white border border-[#8a8a94]">
          <ObjectTree />
        </div>
      </div>
      <div role="tablist" className="h-[33px] shrink-0 flex items-start pl-0.5 text-[#5a5a5a] leading-5">
        <button role="tab" aria-selected="true" className="w-[71px] h-[31px] flex items-center justify-center gap-0.5 bg-white text-black">
          <svg className="w-6 h-6 shrink-0" viewBox="0 0 24 24">
            <circle cx="15" cy="9" r="8.500" fill="#5c86f0" stroke="#3150b8" />
            <path d="M5 5h5l6 18h-4l-1-5H6l-2 5H0zM8 9l-1 6h3z" fill="#14145a" fillRule="evenodd" />
          </svg>
          标准
        </button>
        <button role="tab" className="w-[71px] h-[30px] flex items-center justify-center gap-0.5 bg-[#f0f0f0] border-r border-b border-[#dadae2]">
          <svg className="w-6 h-6 shrink-0" viewBox="0 0 24 24">
            <rect x=".5" y="1" width="23" height="22" fill="#dfe7f6" stroke="#5a6c98" />
            <rect x="0" y="0" width="24" height="5" fill="#3f5cb8" />
            <rect x="9" y="9" width="6" height="6" fill="#3f78e8" />
            <circle cx="8" cy="18" r="3" fill="#e24848" />
            <circle cx="16" cy="18" r="3" fill="#3cb848" />
          </svg>
          控件
        </button>
        <button role="tab" className="w-[71px] h-[30px] flex items-center justify-center gap-0.5 bg-[#f0f0f0] border-r border-b border-[#dadae2]">
          <svg className="w-6 h-6 shrink-0" viewBox="0 0 24 24">
            <path d="M1 5h22" stroke="#20408c" strokeWidth="3" strokeDasharray="3 3" />
            <path d="M1 12.500h22" stroke="#20408c" strokeWidth="3" strokeDasharray="9 4" />
            <path d="M1 20h22" stroke="#20408c" strokeWidth="4" />
          </svg>
          样式
        </button>
        <button role="tab" className="flex-1 h-[30px] flex items-center justify-center gap-1 bg-[#f0f0f0] border-r border-b border-[#dadae2] whitespace-nowrap">
          <AppLogo />
          过程画面
        </button>
      </div>
    </aside>
  )
}

function Toolbars() {
  return (
    <div className="flex flex-col gap-0.5">
      <div className="flex items-start gap-[3px]">
        <Bar>
          <ToolButton label="新建">{icons.new}</ToolButton>
          <ToolButton label="新建模板">{icons.newText}</ToolButton>
          <ToolButton label="打开">{icons.open}</ToolButton>
          <ToolButton label="保存">{icons.save}</ToolButton>
          <Sep />
          <ToolButton label="运行">{icons.play}</ToolButton>
          <Sep />
          <ToolButton label="剪切">{icons.cut}</ToolButton>
          <ToolButton label="复制">{icons.copy}</ToolButton>
          <ToolButton label="粘贴">{icons.paste}</ToolButton>
          <Sep />
          <ToolButton label="撤销">{icons.undo}</ToolButton>
          <ToolButton label="重做">{icons.redo}</ToolButton>
          <Sep />
          <ToolButton label="打印">{icons.print}</ToolButton>
          <Sep />
          <ToolButton label="网格" active>{icons.grid}</ToolButton>
          <ToolButton label="对齐网格" active>{icons.snap}</ToolButton>
          <Sep />
          <ToolButton label="属性" active>{icons.library}</ToolButton>
          <ToolButton label="库">{icons.folderDoc}</ToolButton>
          <ToolButton label="SVG 库">{icons.svgLib}</ToolButton>
          <Sep />
          <ToolButton label="控件">{icons.activeX}</ToolButton>
          <Sep />
          <ToolButton label="帮助">{icons.help}</ToolButton>
        </Bar>
        <Bar className="pr-[5px]">
          <ToolButton label="放大">{icons.zoomIn}</ToolButton>
          <ToolButton label="缩小">{icons.zoomOut}</ToolButton>
          <ToolButton label="区域缩放">{icons.zoomArea}</ToolButton>
          <Combo label="缩放" value="100" className="w-[54px] h-[26px] ml-1" />
        </Bar>
        <Bar>
          <Combo label="字体" value="Arial" className="w-[427px] h-[30px] ml-0.5" />
          <Combo label="字号" value="23" className="w-[93px] h-[27px] ml-[7px] mr-[10px]" />
          <ColorDrop label="线颜色">{icons.brush}</ColorDrop>
          <ColorDrop label="填充颜色">{icons.bucket}</ColorDrop>
          <ColorDrop label="字体颜色">{icons.fontColor}</ColorDrop>
        </Bar>
      </div>
      <div className="flex items-start gap-1">
        <Bar>
          <Combo label="对象" value="按钮1" className="w-[194px] h-6 ml-1 mr-[3px] font-bold" />
          <LinedButton label="置于顶层">{arrange.front}</LinedButton>
          <LinedButton label="置于底层">{arrange.back}</LinedButton>
          <LinedButton label="上移">{arrange.forward}</LinedButton>
          <LinedButton label="下移">{arrange.backward}</LinedButton>
          <Sep />
          <LinedButton label="拾取属性">{arrange.pick}</LinedButton>
          <LinedButton label="应用属性" muted>{arrange.apply}</LinedButton>
          <Sep />
          <LinedButton label="水平镜像">{arrange.mirrorV}</LinedButton>
          <LinedButton label="垂直镜像">{arrange.mirrorH}</LinedButton>
          <LinedButton label="旋转">{arrange.rotate}</LinedButton>
        </Bar>
        <Bar>
          {aligners.map((glyph, i) => (
            <LinedButton key={i} label={`对齐 ${i + 1}`} muted>
              {glyph}
            </LinedButton>
          ))}
        </Bar>
        <Bar>
          {swatches.map((color) => (
            <button key={color} aria-label="颜色" className="w-[33px] h-8 shrink-0 flex flex-col items-center justify-center gap-0.5">
              <span className={`w-6 h-[21px] border-2 border-t-0 border-[#a8a8a8] ring-2 ring-inset ring-[#f0f0f0] ${color}`}></span>
              <span className="w-6 h-0.5 bg-[#26262c]"></span>
            </button>
          ))}
        </Bar>
      </div>
    </div>
  )
}

function StatusBar() {
  return (
    <footer className="h-7 shrink-0 flex items-center bg-[#f0f0f0] border-t border-[#dadada] leading-5 whitespace-nowrap">
      <span className="flex-1 pl-[3px]">按 F1 键查看帮助。</span>
      <span className="w-[193px]">中文(简体，中国)</span>
      <span className="w-[190px] pl-1 h-full flex items-center border-l border-[#dadada]">按钮1</span>
      <span className="w-[202px] pl-2 h-full flex items-center gap-1 border-l border-[#dadada]">
        <svg className="w-[13px] h-[14px]" viewBox="0 0 13 14">
          <path d="M4 1v5M1 4h5" stroke="#111" />
          <rect x="4.500" y="5.500" width="7" height="8" fill="none" stroke="#111" strokeDasharray="1 1" />
        </svg>
        X:180 Y:5
      </span>
      <span className="w-[202px] pl-1 h-full flex items-center gap-1 border-l border-[#dadada]">
        <svg className="w-[15px] h-[14px]" viewBox="0 0 15 14">
          <path d="M5 2.500h9M12 0l2 2.500L12 5M2.500 5v8M.5 11l2 2 2-2" stroke="#111" fill="none" />
          <rect x="5.500" y="5.500" width="7" height="8" fill="none" stroke="#111" strokeDasharray="1 1" />
        </svg>
        X:100 Y:45
      </span>
      <span className="w-[47px] h-full flex items-center justify-center border-l border-[#dadada] text-[#7d7d7d]">CAPS</span>
      <span className="w-[46px] h-full flex items-center justify-center border-l border-[#dadada]">NUM</span>
      <span className="w-11 h-full flex items-center justify-center border-l border-[#dadada] text-[#7d7d7d]">SCRL</span>
      <span className="w-[27px] h-full flex items-end justify-end pr-1 pb-0.5 border-l border-[#dadada]">
        <svg className="w-3 h-3" viewBox="0 0 12 12">
          <path d="M9 1h3v3H9zM5 5h3v3H5zM9 5h3v3H9zM1 9h3v3H1zM5 9h3v3H5zM9 9h3v3H9z" fill="#bdbdbd" />
        </svg>
      </span>
    </footer>
  )
}

function BackWindow() {
  return (
    <div className="absolute inset-0 flex flex-col text-[18px] leading-5 overflow-hidden">
      <div className="h-16 shrink-0 bg-white border-b border-[#a8a8a8] pt-[7px]">
        <p className="text-[#a0a0a0]">:\Us</p>
        <p className="mt-3">V)</p>
      </div>
      <div className="h-[25px] shrink-0 bg-white border-b-2 border-[#6d6d6d] flex items-center">
        <svg className="w-7 h-5" viewBox="0 0 28 20">
          <path d="M-2 3h5v5h-5zM4 3h5v5H4zM-2 12h5v5h-5zM4 12h5v5H4z" fill="#eceef6" />
          <path d="M-2 8.500h5V3M4 8.500h5V3M-2 17.500h5V12M4 17.500h5V12" fill="none" stroke="#223" />
          <path d="M20 3h3l2 2v5h-5z" fill="#fff" stroke="#335" />
        </svg>
      </div>
      <div className="flex-1 bg-[#f4f4fa]"></div>
      <div className="h-[25px] shrink-0 bg-[#f0f0f0] border-t border-[#c8c8c8] flex justify-end pr-[115px] pt-1">选择了 1 个对象</div>
    </div>
  )
}

export default function App() {
  return (
    <div className="relative h-screen flex overflow-hidden pl-7 pr-[39px] pb-[5px] bg-[#f4f4fa] text-black text-[17px] font-['Open_Sans','Noto_Sans_CJK_SC',sans-serif]">
      <BackWindow />
      <main className="relative flex-1 min-w-0 flex flex-col border-l border-b border-[#6a6a6a] bg-linear-to-r from-[#e9ebfa] to-[#f1f4fd] shadow-[0_0_18px_rgba(0,0,0,0.45)]">
        <header className="h-11 shrink-0 flex items-center bg-white pl-[11px] text-[18px]">
          <AppLogo />
          <h1 className="flex-1 ml-1.5 pb-px">图形编辑器 - 工具栏.PDL</h1>
          <button aria-label="最小化" className="w-[70px] h-full flex items-center justify-center">
            <svg className="w-4 h-4" viewBox="0 0 16 16">
              <path d="M0 8.500h16" stroke="#000" />
            </svg>
          </button>
          <button aria-label="最大化" className="w-[70px] h-full flex items-center justify-center">
            <svg className="w-4 h-4" viewBox="0 0 16 16">
              <path d="M.5.5h15v15H.5z" stroke="#000" fill="none" />
            </svg>
          </button>
          <button aria-label="关闭" className="w-[70px] h-full flex items-center justify-center">
            <svg className="w-4 h-4" viewBox="0 0 16 16">
              <path d="M.5.5l15 15M15.500.5l-15 15" stroke="#000" />
            </svg>
          </button>
        </header>
        <nav className="h-[33px] shrink-0 flex items-center gap-[15px] pl-[15px] pb-0.5">
          {menus.map((menu) => (
            <button key={menu}>{menu}</button>
          ))}
        </nav>
        <Toolbars />
        <div className="flex-1 min-h-0 flex gap-1">
          <div className="flex-1 min-w-0 flex flex-col border-r border-[#a0a4ae]">
            <div className="h-8 shrink-0 flex items-end pl-[5px] pr-1.5">
              <div className="flex shrink-0">
                <Slant />
                <button className="h-[30px] w-[78px] pl-[7px] pb-0.5 text-left border-t border-[#8e98a8] bg-linear-to-b from-[#b5d6f7] to-[#9cb8d6]">main.Pdl</button>
              </div>
              <div className="relative flex shrink-0 -ml-[21px] mr-px">
                <Slant active />
                <button className="h-[30px] w-32 pl-[3px] pr-2 pb-0.5 flex items-center justify-between font-bold rounded-tr-[4px] border-t border-r border-[#8e98a8] bg-linear-to-b from-[#cdf6fe] to-[#b2dcf8]">
                  工具栏.PDL
                  <svg className="w-[13px] h-[13px]" viewBox="0 0 13 13">
                    <path d="M1 1l11 11M12 1L1 12" stroke="#111" strokeWidth="2.500" />
                  </svg>
                </button>
              </div>
              <DocTab name="标题.PDL" />
              <DocTab name="报警画面.PDL" wide />
              <DocTab name="过程画面.PDL" wide />
              <button aria-label="窗口列表" className="ml-auto h-full">
                <svg className="w-[14px] h-2" viewBox="0 0 14 8">
                  <path d="M0 0h14L7 8z" />
                </svg>
              </button>
            </div>
            <div className="flex-1 min-h-0 flex border-t border-l border-b border-[#a0a4ae] bg-[#b4d6f0] p-0.5">
              <div className="relative flex-1 min-w-0 bg-[#c0c0c0] border-t border-l border-r border-b border-[#696969] border-r-white border-b-white">
                <div className="relative w-[800px] h-[50px] border border-black bg-[linear-gradient(to_right,transparent_1px,#c0c0c0_1px),linear-gradient(#111_1px,#c0c0c0_1px)] bg-[length:10px_10px] bg-[position:9px_9px]">
                  <CanvasButton text="报警界面" className="left-[179px]" />
                  <CanvasButton text="运行画面" className="left-[399px]" />
                  <span className="absolute left-[175px] top-[24px] w-[5px] h-[5px] bg-black ring-1 ring-white"></span>
                  <span className="absolute left-[280px] top-[24px] w-[5px] h-[5px] bg-black ring-1 ring-white"></span>
                  <span className="absolute left-[280px] top-[-1px] w-[5px] h-[4px] bg-black ring-1 ring-white"></span>
                </div>
                <PropertyWindow />
              </div>
            </div>
          </div>
          <ObjectPanel />
        </div>
        <div className="h-9 shrink-0 flex">
          <Bar className="pr-1">
            {layers.map((n) => (
              <button
                key={n}
                className="w-[34px] h-8 shrink-0 -mr-px flex flex-col items-center justify-center gap-0.5 border border-[#0078d7] bg-[#cfe4f5] text-[#333] font-semibold leading-5"
              >
                {n}
                <span className="w-6 h-0.5 bg-[#26262c]"></span>
              </button>
            ))}
            <LinedButton label="活动层">
              <path d="M1 7h10V1l11 9-11 9v-6H1z" fill="#6cb61e" stroke="#4c8a10" />
            </LinedButton>
            <Sep />
            <Combo label="图层" value="0 - 层0" className="w-[194px] h-7 ml-1 pl-[9px]" />
          </Bar>
        </div>
        <StatusBar />
      </main>
      <ConnectionDialog />
      <div className="absolute inset-0 pointer-events-none text-[#ff2012]">
        {marks.map((mark) => (
          <React.Fragment key={mark.digit}>
            <span className={`absolute text-[50px] leading-[54px] ${mark.digitClass}`}>{mark.digit}</span>
            <span className={`absolute rounded-[6px] border-[5px] border-[#ff2012] ${mark.boxClass}`}></span>
          </React.Fragment>
        ))}
      </div>
    </div>
  )
}
